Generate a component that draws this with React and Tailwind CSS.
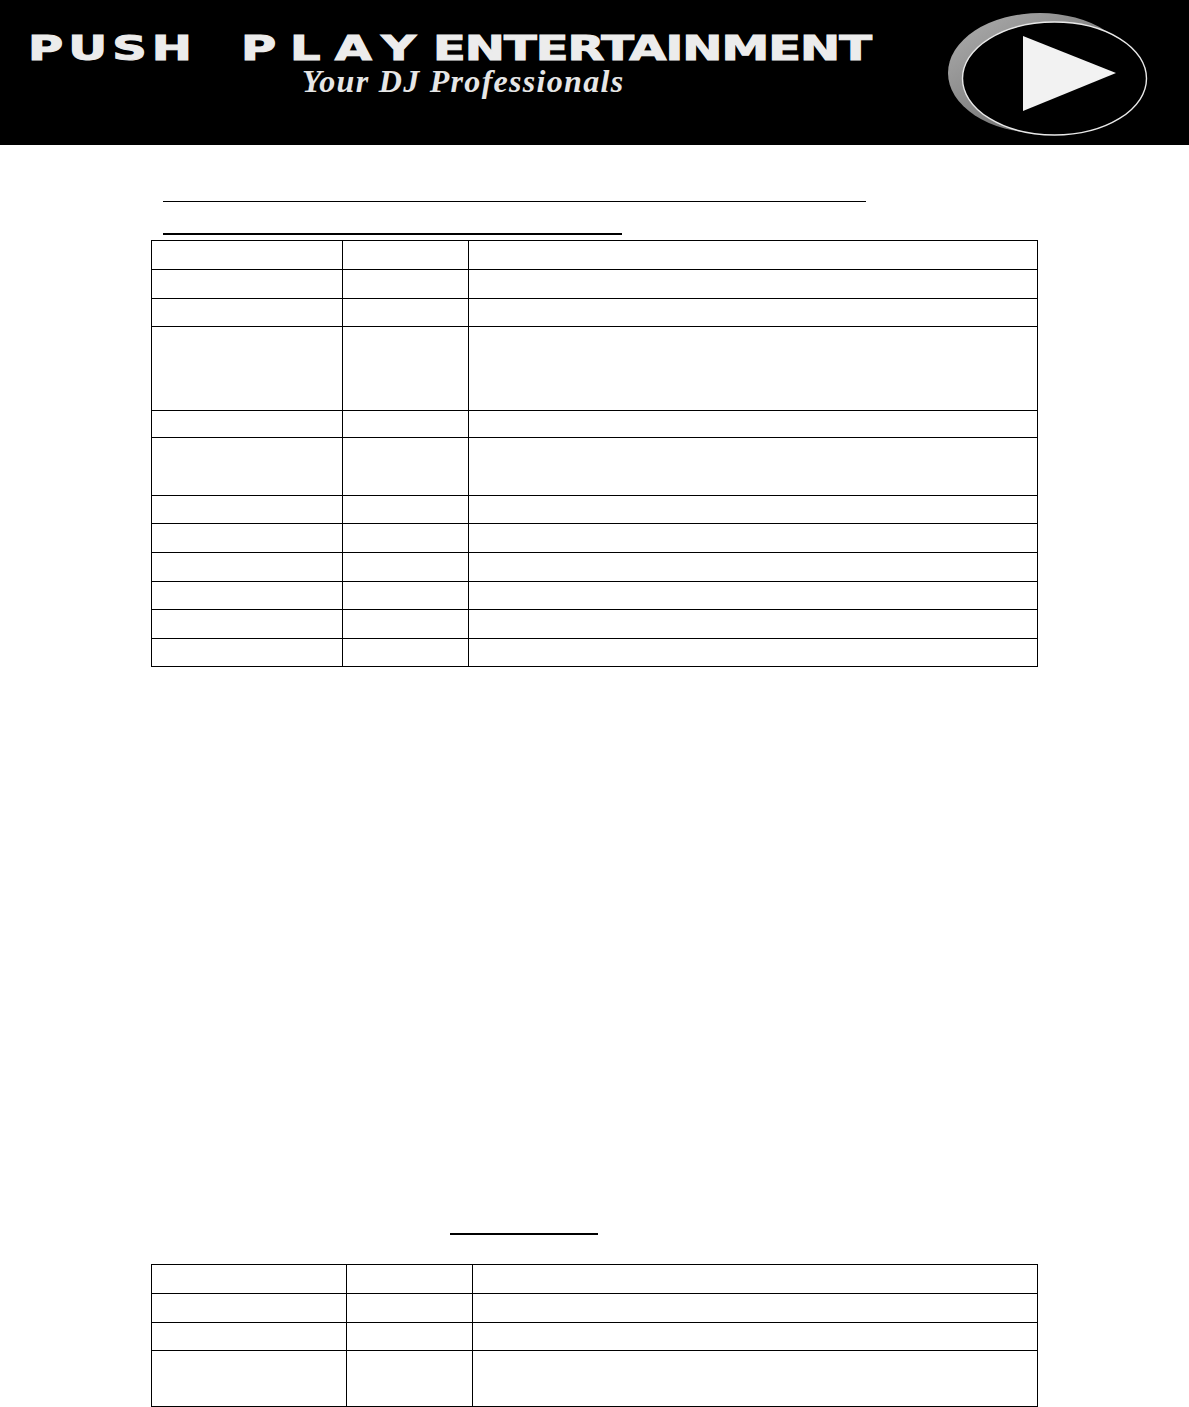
import React from "react";

const topRows = [
  "h-[29px]",
  "h-[29px]",
  "h-[28px]",
  "h-[84px]",
  "h-[27px]",
  "h-[58px]",
  "h-[28px]",
  "h-[29px]",
  "h-[29px]",
  "h-[28px]",
  "h-[29px]",
  "h-[27px]",
];

const bottomRows = ["h-[29px]", "h-[29px]", "h-[28px]", "h-[55px]"];

const PlayLogo = () => (
  <svg
    width="220"
    height="145"
    viewBox="935 0 220 145"
    className="ml-auto mr-[34px] shrink-0"
  >
    <defs>
      <linearGradient id="rim" x1="0" y1="0" x2="1" y2="1">
        <stop offset="0%" stopColor="#b0b0b0" />
        <stop offset="60%" stopColor="#7a7a7a" />
        <stop offset="100%" stopColor="#555" />
      </linearGradient>
    </defs>
    <ellipse cx="1040" cy="73" rx="92" ry="60" fill="url(#rim)" />
    <ellipse
      cx="1054.5"
      cy="78.5"
      rx="92"
      ry="56.5"
      fill="#000"
      stroke="#e8e8e8"
      strokeWidth="1.4"
    />
    <polygon points="1023,36 1023,111 1116,73" fill="#f2f2f2" />
  </svg>
);

const Banner = () => (
  <div className="flex h-[145px] items-start bg-black">
    <div className="pl-[28px] pt-[33px]">
      <div
        className="flex text-[48px] leading-[30px] font-bold whitespace-nowrap text-[#ececec] [transform:scaleY(0.72)] [-webkit-text-stroke:1.5px_#ececec]"
        style={{ fontFamily: '"DejaVu Sans", sans-serif' }}
      >
        <span className="inline-block tracking-[5px]">PUSH</span>
        <span className="ml-[44px] inline-block tracking-[14px]">PLAY</span>
        <span className="ml-[3px] inline-block tracking-[-1px]">
          ENTERTAINMENT
        </span>
      </div>
      <div
        className="mt-[2px] pl-[274px] text-[32px] leading-none font-bold italic tracking-[1.3px] text-[#e6e6e6]"
        style={{ fontFamily: '"Liberation Serif", serif' }}
      >
        Your DJ Professionals
      </div>
    </div>
    <PlayLogo />
  </div>
);

const BlankTable = ({ rows, first, second, className }) => (
  <div className={`w-[887px] border border-black ${className}`}>
    {rows.map((h, i) => (
      <div key={i} className={`flex border-b border-black last:border-b-0 ${h}`}>
        <div className={`${first} border-r border-black`} />
        <div className={`${second} border-r border-black`} />
        <div className="flex-1" />
      </div>
    ))}
  </div>
);

export default function App() {
  return (
    <div
      className="min-h-[1407px] bg-white text-black"
      style={{ fontFamily: '"Liberation Serif", serif' }}
    >
      <Banner />
      <div className="pl-[151px]">
        <div className="pt-[56px] pl-[12px]">
          <div className="w-[703px] border-t border-black" />
          <div className="mt-[31px] w-[459px] border-t-2 border-black" />
        </div>
        <BlankTable
          rows={topRows}
          first="w-[191px]"
          second="w-[126px]"
          className="mt-[5px]"
        />
        <div className="mt-[566px] ml-[299px] w-[148px] border-t-2 border-black" />
        <BlankTable
          rows={bottomRows}
          first="w-[195px]"
          second="w-[126px]"
          className="mt-[29px]"
        />
      </div>
    </div>
  );
}
